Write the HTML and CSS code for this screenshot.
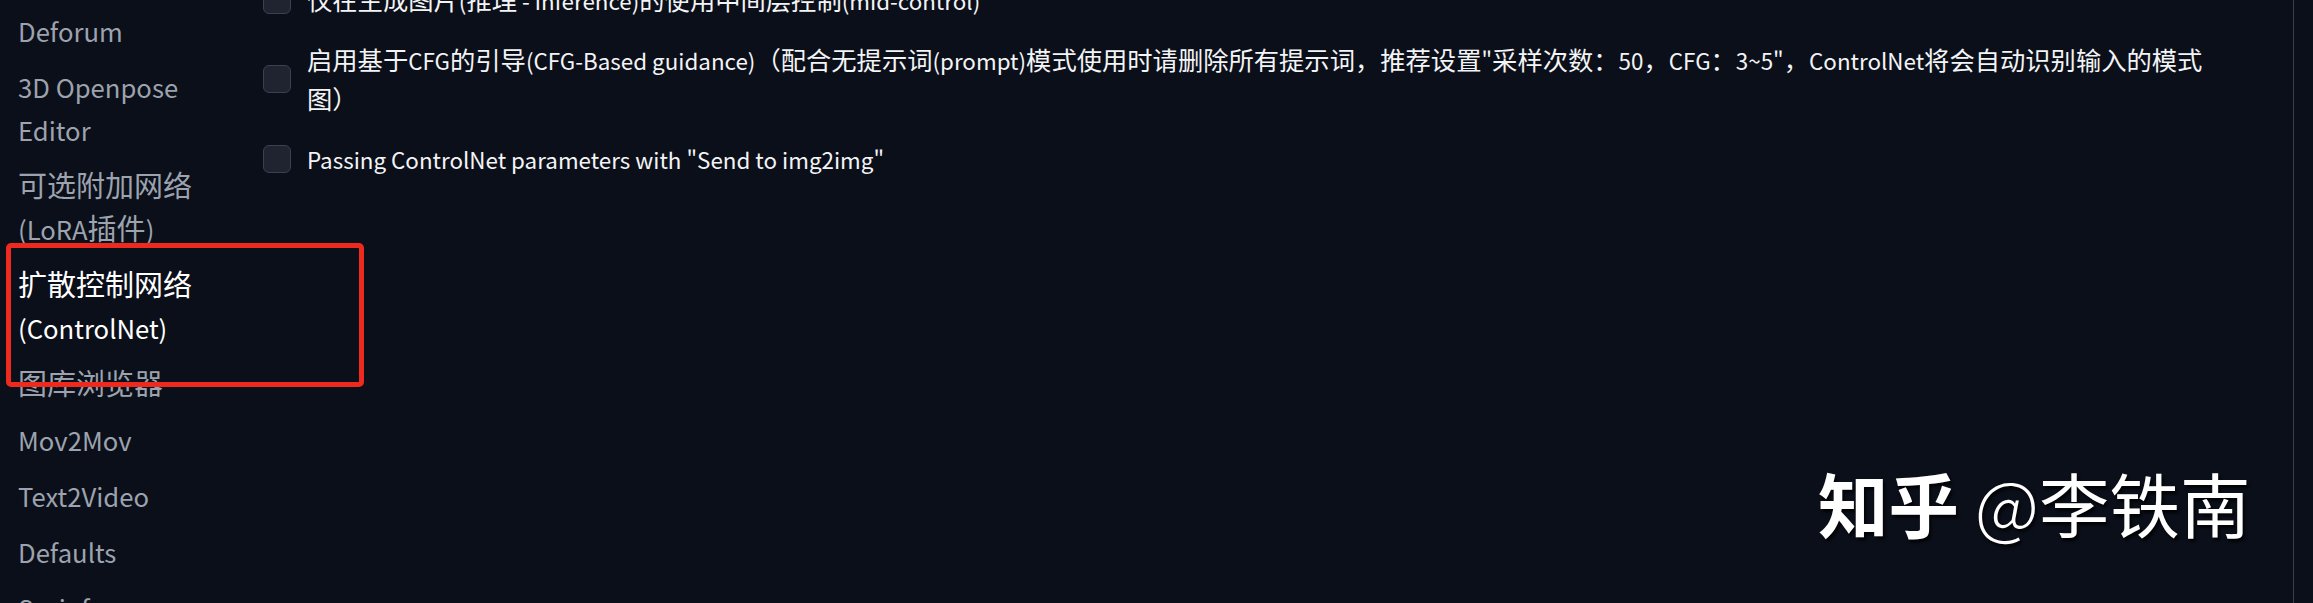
FILE: index.html
```html
<!DOCTYPE html>
<html lang="zh-CN">
<head>
<meta charset="utf-8">
<title>ControlNet settings</title>
<link rel="stylesheet" href="styles.css">
</head>
<body>
<div class="app">
  <nav class="sidebar">
    <div class="tab"><span class="en">Deforum</span></div>
    <div class="tab"><span class="en">3D Openpose Editor</span></div>
    <div class="tab">可选附加网络<span class="en">(LoRA</span>插件<span class="en">)</span></div>
    <div class="tab active">扩散控制网络<span class="en">(ControlNet)</span></div>
    <div class="tab">图库浏览器</div>
    <div class="tab"><span class="en">Mov2Mov</span></div>
    <div class="tab"><span class="en">Text2Video</span></div>
    <div class="tab"><span class="en">Defaults</span></div>
    <div class="tab"><span class="en">Sysinfo</span></div>
  </nav>
  <main class="main">
    <div class="options">
      <label class="option"><span class="box"></span><span class="label">仅在生成图片<span class="en">(</span>推理<span class="en"> - inference)</span>的使用中间层控制<span class="en">(mid-control)</span></span></label>
      <label class="option"><span class="box"></span><span class="label">启用基于<span class="en">CFG</span>的引导<span class="en">(CFG-Based guidance)</span>（配合无提示词<span class="en">(prompt)</span>模式使用时请删除所有提示词，推荐设置<span class="en">"</span>采样次数：<span class="en">50</span>，<span class="en">CFG</span>：<span class="en">3~5"</span>，<span class="en">ControlNet</span>将会自动识别输入的模式图）</span></label>
      <label class="option"><span class="box"></span><span class="label"><span class="en">Passing ControlNet parameters with "Send to img2img"</span></span></label>
    </div>
  </main>
  <div class="rail"></div>
</div>
<div class="highlight"></div>
<div class="watermark"><span class="wm-logo">知乎</span> <span class="wm-at">@</span>李铁南</div>
</body>
</html>
```
FILE: styles.css
```css
html, body {
  margin: 0;
  padding: 0;
  background: #0b0f19;
  height: 100%;
  overflow: hidden;
}
body {
  font-family: "Noto Sans CJK SC", "Noto Sans", sans-serif;
  color: #f3f4f6;
  position: relative;
}
.en {
  line-height: 1;
}
.app {
  display: flex;
  height: 603px;
}
.sidebar {
  width: 220px;
  padding: 1px 0 0 18px;
  flex: none;
  display: flex;
  flex-direction: column;
}
.tab {
  font-size: 29px;
  line-height: 43px;
  padding: 6.5px 0;
  color: #9ca3af;
}
.tab .en {
  font-size: 0.885em;
}
.tab.active {
  color: #ffffff;
}
.main {
  flex: none;
  width: 1955px;
  margin-left: 25px;
}
.options {
  margin-top: -20px;
  display: flex;
  flex-direction: column;
  gap: 21px;
}
.option {
  display: flex;
  align-items: center;
  gap: 16px;
}
.box {
  flex: none;
  width: 26px;
  height: 26px;
  border: 1px solid #374151;
  border-radius: 6px;
  background: #1f2430;
}
.label {
  font-size: 25.3px;
  line-height: 39px;
  color: #f3f4f6;
}
.label .en {
  font-size: 0.885em;
}
.rail {
  margin-left: auto;
  width: 1px;
  background: #3a3f4a;
  margin-right: 19px;
}
.highlight {
  position: absolute;
  left: 6px;
  top: 243px;
  width: 348px;
  height: 134px;
  border: 5px solid #ee2a1f;
  border-radius: 5px;
}
.watermark {
  position: absolute;
  left: 1818px;
  top: 457px;
  font-size: 70.5px;
  line-height: 90px;
  color: #ffffff;
  font-weight: 400;
  white-space: nowrap;
  text-shadow: 2px 3px 3px rgba(0, 0, 0, 0.8);
}
.wm-logo {
  font-weight: 700;
}
.wm-at {
  font-weight: 300;
}
```
